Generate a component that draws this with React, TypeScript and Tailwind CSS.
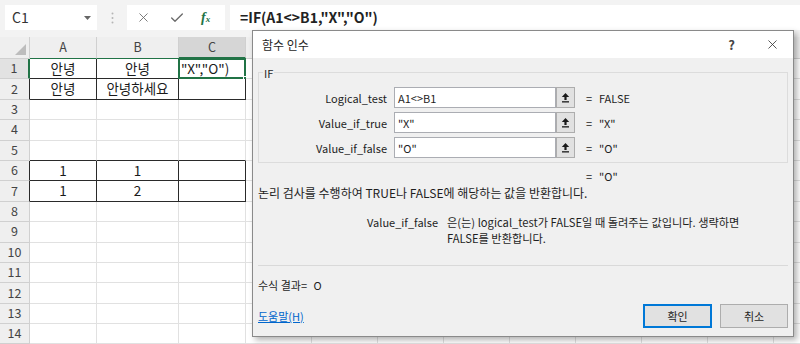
import { Check, X } from "lucide-react";

const cols = ["A", "B", "C", "D", "E", "F", "G", "H", "I", "J", "K", "L"];
const rows = [1, 2, 3, 4, 5, 6, 7, 8, 9, 10, 11, 12, 13, 14];
const tableRows = [1, 2, 6, 7];
const tableCols = ["A", "B", "C"];

const data: Record<string, string> = {
  A1: "안녕",
  B1: "안녕",
  C1: '"X","O")',
  A2: "안녕",
  B2: "안녕하세요",
  A6: "1",
  B6: "1",
  A7: "1",
  B7: "2",
};

function Cell({ col, row }: { col: string; row: number }) {
  const key = `${col}${row}`;
  const inTable = tableRows.includes(row) && tableCols.includes(col);
  const aboveTable = row === 5 && tableCols.includes(col);
  const right = inTable ? "border-r-[#2a2a2a]" : "border-r-[#e1e1e1]";
  const bottom = inTable || aboveTable ? "border-b-[#2a2a2a]" : "border-b-[#e1e1e1]";
  const align = col === "C" ? "justify-start pl-[2px]" : "justify-center";

  return (
    <div
      className={`relative flex items-center border-r border-b ${right} ${bottom} ${align} bg-white text-[13.5px] leading-none text-[#1a1a1a] whitespace-nowrap`}
    >
      {data[key]}
      {key === "C1" && (
        <>
          <div className="absolute left-[-1px] top-[-1px] right-[-1px] bottom-[-1px] border-2 border-[#217346]" />
          <div className="absolute right-[-4px] bottom-[-4px] w-[6px] h-[6px] bg-[#217346] border border-white" />
        </>
      )}
    </div>
  );
}

function UpButton() {
  return (
    <div className="w-[19px] h-[21px] flex items-center justify-center bg-[#e1e1e1] border border-[#adadad]">
      <svg width="9" height="11" viewBox="0 0 9 11">
        <path d="M4.5 1 L0.8 5 H3.4 V8 H5.6 V5 H8.2 Z" fill="#1a1a1a" />
        <rect x="1" y="9.2" width="7" height="1.3" fill="#1a1a1a" />
      </svg>
    </div>
  );
}

function ArgRow({ label, value, result }: { label: string; value: string; result: string }) {
  return (
    <div className="flex items-center h-[21px]">
      <div className="w-[128px] text-right">{label}</div>
      <div className="ml-[7px] w-[162px] h-[21px] bg-white border border-[#abadb3] flex items-center pl-[3px]">
        {value}
      </div>
      <UpButton />
      <span className="ml-[11px] w-[13px]">=</span>
      <span>{result}</span>
    </div>
  );
}

export default function App() {
  return (
    <div className="relative w-[800px] h-[344px] overflow-hidden bg-white font-['Noto_Sans_CJK_KR',sans-serif]">
      {/* 수식 입력줄 */}
      <div className="h-[37px] bg-[#f3f3f3] flex items-start pt-[5px] pl-[5px]">
        <div className="w-[92px] h-[25px] bg-white flex items-center pl-[7px] pr-[6px] text-[14px] text-[#333]">
          <span>C1</span>
          <svg className="ml-auto" width="7" height="4" viewBox="0 0 7 4">
            <path d="M0 0 H7 L3.5 4 Z" fill="#666" />
          </svg>
        </div>
        <div className="w-[30px] h-[25px] flex items-center justify-center">
          <svg width="3" height="12" viewBox="0 0 3 12">
            <circle cx="1.5" cy="1.5" r="1" fill="#b5b5b5" />
            <circle cx="1.5" cy="6" r="1" fill="#b5b5b5" />
            <circle cx="1.5" cy="10.5" r="1" fill="#b5b5b5" />
          </svg>
        </div>
        <div className="w-[98px] h-[25px] bg-white flex items-center text-[#6a6a6a]">
          <X size={15} strokeWidth={1.4} className="ml-[9px]" />
          <Check size={16} strokeWidth={2} className="ml-[18px]" />
          <span className="ml-[16px] font-['Liberation_Serif',serif] italic font-bold text-[14px] text-[#217346] leading-none">
            f<span className="text-[9px]">x</span>
          </span>
        </div>
        <div className="ml-[5px] flex-1 h-[25px] bg-white flex items-center pl-[10px] text-[14px] font-bold text-[#222]">
          =IF(A1&lt;&gt;B1,"X","O")
        </div>
      </div>

      {/* 시트 */}
      <div className="grid grid-cols-[30px_67px_82px_67px_repeat(9,66px)] grid-rows-[22px_repeat(14,20.4px)]">
        <div className="bg-[#efefef] border-r border-b border-r-[#d0d0d0] border-b-[#d0d0d0] relative">
          <svg className="absolute right-[3px] bottom-[3px]" width="11" height="11" viewBox="0 0 11 11">
            <path d="M11 0 V11 H0 Z" fill="#bdbdbd" />
          </svg>
        </div>
        {cols.map((c) => (
          <div
            key={c}
            className={`flex items-center justify-center border-r border-r-[#d0d0d0] text-[12.5px] text-[#444] ${
              c === "C"
                ? "bg-[#d6d6d6] border-b-2 border-b-[#217346]"
                : tableCols.includes(c)
                ? "bg-[#efefef] border-b border-b-[#217346]"
                : "bg-[#efefef] border-b border-b-[#d0d0d0]"
            }`}
          >
            {c}
          </div>
        ))}
        {rows.map((r) => (
          <div key={r} className="contents">
            <div
              className={`flex items-center justify-center border-b border-b-[#d0d0d0] text-[12.5px] text-[#444] ${
                r === 1
                  ? "bg-[#e2e2e2] border-r-2 border-r-[#217346]"
                  : tableRows.includes(r)
                  ? "bg-[#efefef] border-r border-r-[#2a2a2a]"
                  : "bg-[#efefef] border-r border-r-[#d0d0d0]"
              }`}
            >
              {r}
            </div>
            {cols.map((c) => (
              <Cell key={c} col={c} row={r} />
            ))}
          </div>
        ))}
      </div>

      {/* 함수 인수 대화상자 */}
      <div className="absolute left-[252px] top-[30px] w-[542px] h-[307px] bg-[#f0f0f0] border border-[#8a8a8a] shadow-[3px_3px_6px_rgba(0,0,0,0.3)] text-[11px] leading-[16px] text-[#1e1e1e]">
        <div className="h-[27px] bg-white flex items-center pl-[9px] pr-[13px]">
          <span className="text-[12px]">함수 인수</span>
          <span className="ml-auto mr-[30px] text-[13px] font-bold text-[#444]">?</span>
          <X size={15} strokeWidth={1.3} className="text-[#333]" />
        </div>

        <div className="px-[5px]">
          <div className="relative mt-[14px] h-[91px] border border-[#dcdcdc] pt-[14px] flex flex-col gap-[4px]">
            <span className="absolute top-[-8px] left-[4px] px-[1px] bg-[#f0f0f0]">IF</span>
            <ArgRow label="Logical_test" value="A1<>B1" result="FALSE" />
            <ArgRow label="Value_if_true" value={'"X"'} result={'"X"'} />
            <ArgRow label="Value_if_false" value={'"O"'} result={'"O"'} />
          </div>

          <div className="mt-[5px] pl-[328px] flex">
            <span className="w-[13px]">=</span>
            <span>"O"</span>
          </div>

          <div className="mt-[1px] text-[12px]">논리 검사를 수행하여 TRUE나 FALSE에 해당하는 값을 반환합니다.</div>

          <div className="mt-[13px] flex">
            <div className="w-[180px] text-right">Value_if_false</div>
            <div className="ml-[9px] text-[11.2px]">
              <div>은(는) logical_test가 FALSE일 때 돌려주는 값입니다. 생략하면</div>
              <div>FALSE를 반환합니다.</div>
            </div>
          </div>

          <div className="mt-[19px] h-px bg-[#d9d9d9]" />

          <div className="mt-[11px]">
            수식 결과= <span className="ml-[4px]">O</span>
          </div>

          <div className="mt-[11px] flex items-center">
            <span className="text-[#0066cc] underline">도움말(H)</span>
            <button className="ml-auto w-[69px] h-[24px] bg-[#e1e1e1] border-2 border-[#0078d7] text-[11px]">
              확인
            </button>
            <button className="ml-[8px] w-[68px] h-[24px] bg-[#e1e1e1] border border-[#adadad] text-[11px]">
              취소
            </button>
          </div>
        </div>
      </div>
    </div>
  );
}
